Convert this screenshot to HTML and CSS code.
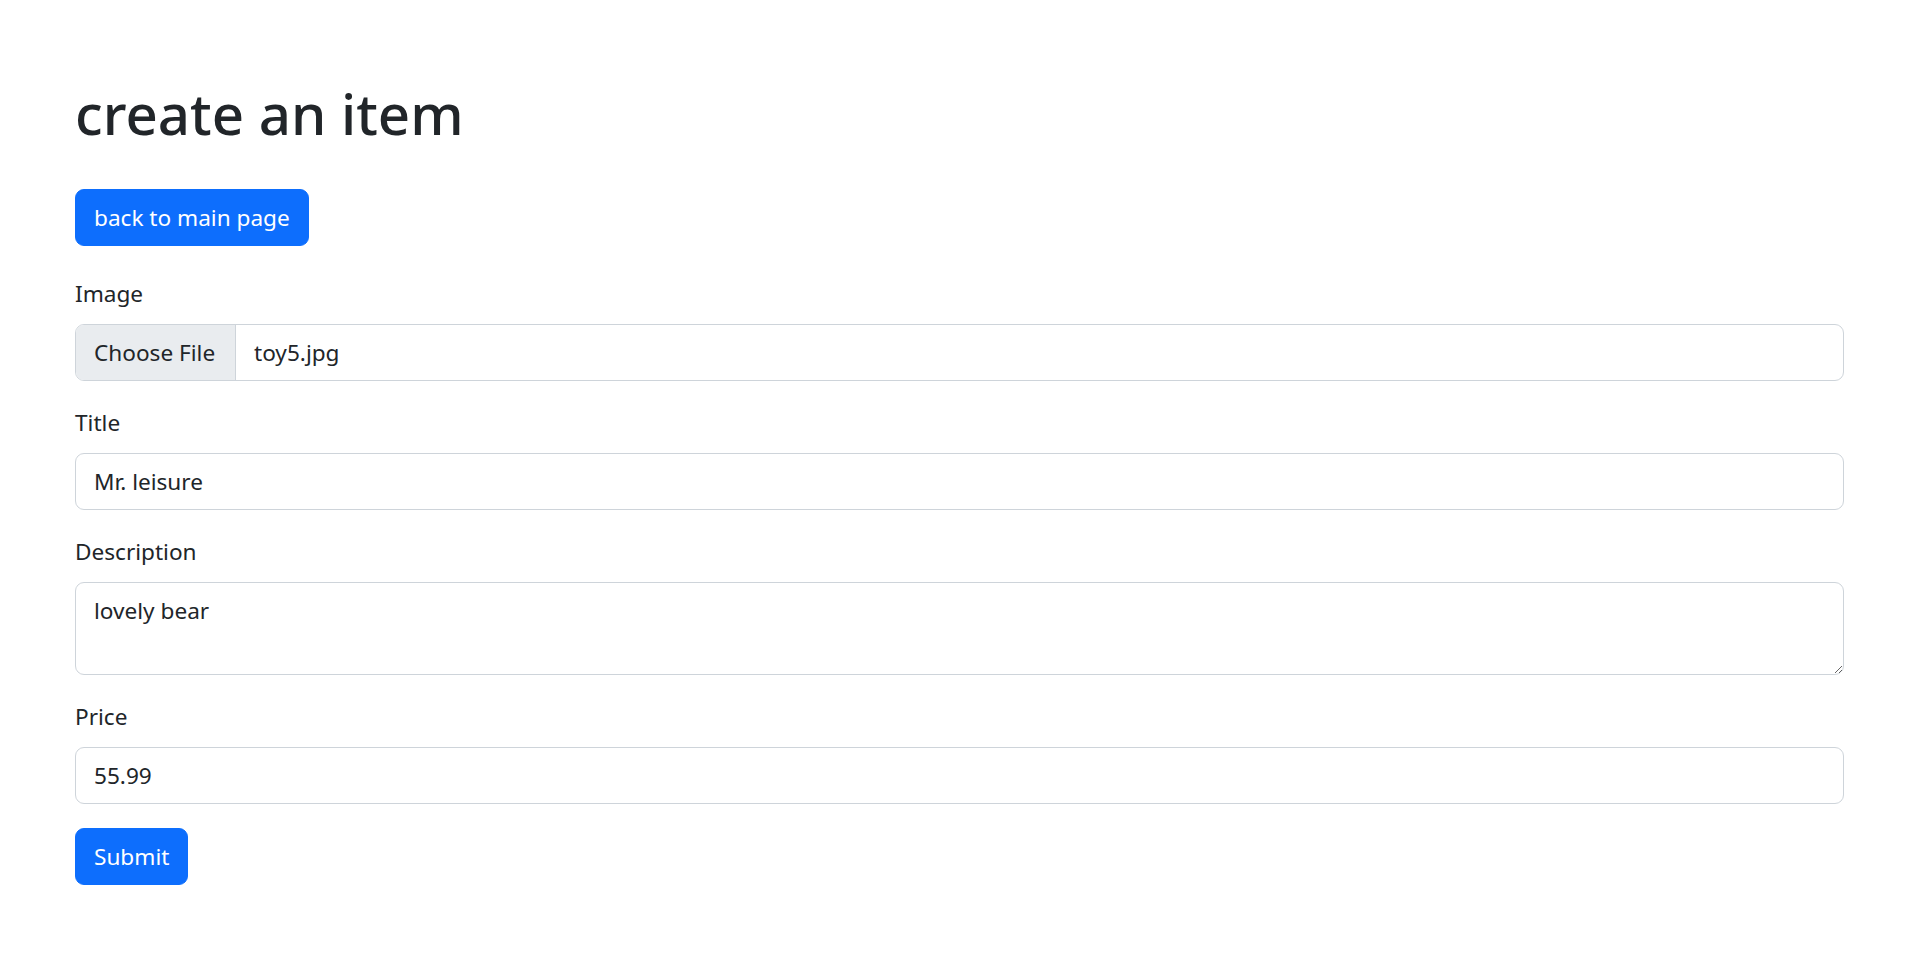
FILE: index.html
```html
<!DOCTYPE html>
<html lang="en">
<head>
<meta charset="utf-8">
<title>create an item</title>
<link rel="stylesheet" href="styles.css">
</head>
<body>
<main class="page">
  <h1 class="title">create an item</h1>
  <a class="btn back" href="#">back to main page</a>
  <form class="form">
    <div class="field">
      <label class="label">Image</label>
      <div class="control file"><span class="file-btn">Choose File</span><span class="file-name">toy5.jpg</span></div>
    </div>
    <div class="field">
      <label class="label" for="title">Title</label>
      <input class="control" id="title" type="text" value="Mr. leisure">
    </div>
    <div class="field">
      <label class="label" for="desc">Description</label>
      <textarea class="control area" id="desc" rows="2">lovely bear</textarea>
    </div>
    <div class="field">
      <label class="label" for="price">Price</label>
      <input class="control" id="price" type="text" value="55.99">
    </div>
    <button class="btn submit" type="button">Submit</button>
  </form>
</main>
</body>
</html>
```

FILE: styles.css
```css
html, body {
  margin: 0;
  padding: 0;
  background: #fff;
}
body {
  font-family: "Noto Sans", "Open Sans", sans-serif;
  font-size: 22.6px;
  line-height: 36px;
  color: #212529;
}
.page {
  padding: 78px 76px 0 75px;
}
.title {
  margin: 0 0 39px;
  font-size: 56.4px;
  line-height: 72px;
  font-weight: 500;
  color: #212529;
}
.btn {
  display: block;
  width: fit-content;
  box-sizing: border-box;
  padding: 10px 18px 9px;
  border: 1px solid #0d6efd;
  border-radius: 9px;
  background: #0d6efd;
  color: #fff;
  font: inherit;
  line-height: 36px;
  text-decoration: none;
  cursor: pointer;
}
.back {
  margin-bottom: 30px;
}
.form {
  margin: 0;
}
.field {
  margin-bottom: 24px;
}
.label {
  display: block;
  margin-bottom: 12px;
  line-height: 36px;
  padding-top: 1px;
  margin-top: -1px;
}
.control {
  display: block;
  width: 100%;
  box-sizing: border-box;
  margin: 0;
  padding: 10px 18px 9px;
  border: 1px solid #ced4da;
  border-radius: 9px;
  background: #fff;
  color: #212529;
  font: inherit;
  line-height: 36px;
  outline: none;
}
.area {
  height: 93px;
  resize: vertical;
}
.file {
  display: flex;
  padding: 0;
  overflow: hidden;
}
.file-btn {
  box-sizing: border-box;
  width: 160px;
  padding: 10px 18px 9px;
  background: #e9ecef;
  border-right: 1px solid #ced4da;
  white-space: nowrap;
}
.file-name {
  padding: 10px 18px 9px;
}
```
